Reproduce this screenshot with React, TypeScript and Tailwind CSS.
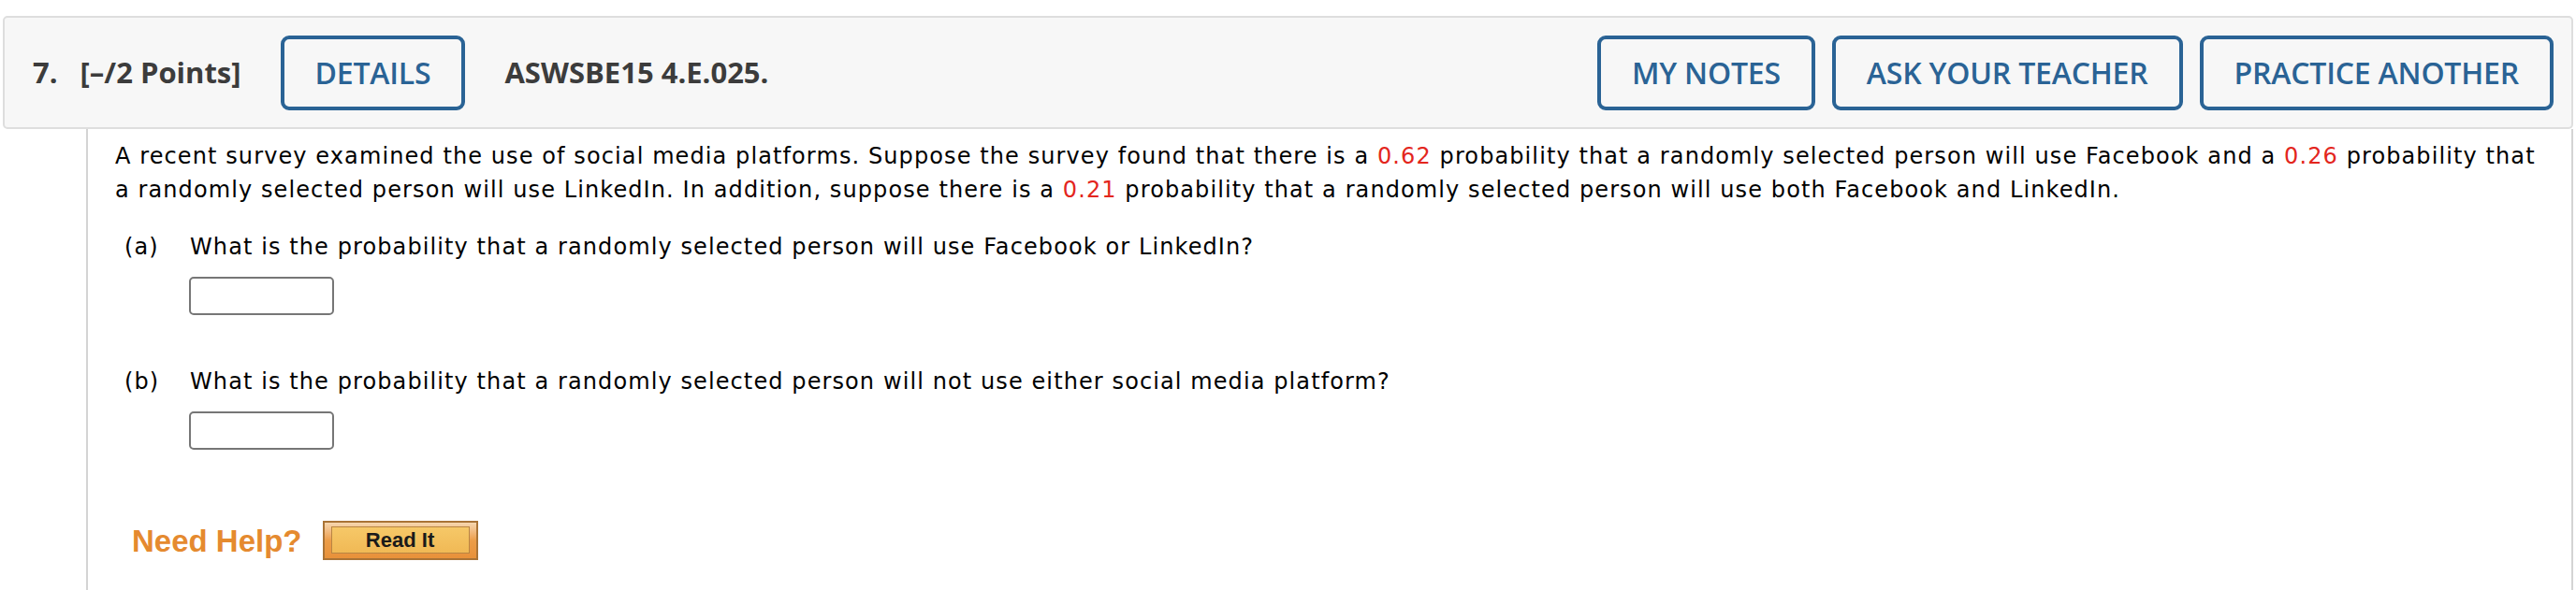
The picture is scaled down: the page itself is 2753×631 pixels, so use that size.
const HeaderButton = ({ label }: { label: string }) => (
  <button className="h-[80px] px-[33px] rounded-[9px] border-4 border-[#2a6395] text-[#2a6395] font-semibold text-[32px] leading-none tracking-[-0.2px]">
    {label}
  </button>
);

const Red = ({ children }: { children: string }) => (
  <span className="text-[#e3261d]">{children}</span>
);

const AnswerBox = () => (
  <input
    type="text"
    className="block ml-[69px] w-[155px] h-[41px] border-2 border-[#767676] rounded-[5px] bg-white outline-none"
  />
);

export default function App() {
  return (
    <div className="w-full bg-white pt-[17px] px-[3px]" style={{ fontFamily: '"Open Sans", sans-serif' }}>
      <div className="h-[121px] flex items-center border-2 border-[#dedede] rounded-[5px] bg-[#f7f7f7] pl-[30px] pr-[19px]">
        <div className="flex items-center text-[31px] font-bold text-[#3c3c3c] leading-none">
          <span>7.</span>
          <span className="ml-[24px]">[–/2 Points]</span>
        </div>
        <div className="ml-[42px]">
          <HeaderButton label="DETAILS" />
        </div>
        <div className="ml-[42px] text-[31px] font-bold text-[#3c3c3c] leading-none">ASWSBE15 4.E.025.</div>
        <div className="ml-auto flex gap-[18px]">
          <HeaderButton label="MY NOTES" />
          <HeaderButton label="ASK YOUR TEACHER" />
          <HeaderButton label="PRACTICE ANOTHER" />
        </div>
      </div>

      <div
        className="ml-[89px] h-[493px] border-l-2 border-r-2 border-[#d4d4d4] pl-[29px] pr-[30px] pt-[11px] text-black text-[24px] leading-[36px] tracking-[1.1px]"
        style={{ fontFamily: '"DejaVu Sans", Verdana, sans-serif' }}
      >
        <p>
          A recent survey examined the use of social media platforms. Suppose the survey found that there is a <Red>0.62</Red> probability that a randomly selected person will use Facebook and a <Red>0.26</Red> probability that a randomly selected person will use LinkedIn. In addition, suppose there is a <Red>0.21</Red> probability that a randomly selected person will use both Facebook and LinkedIn.
        </p>

        <div className="mt-[25px] ml-[10px]">
          <div className="flex">
            <span className="w-[70px] shrink-0">(a)</span>
            <span>What is the probability that a randomly selected person will use Facebook or LinkedIn?</span>
          </div>
          <div className="mt-[14px]">
            <AnswerBox />
          </div>
        </div>

        <div className="mt-[53px] ml-[10px]">
          <div className="flex">
            <span className="w-[70px] shrink-0">(b)</span>
            <span>What is the probability that a randomly selected person will not use either social media platform?</span>
          </div>
          <div className="mt-[14px]">
            <AnswerBox />
          </div>
        </div>

        <div className="mt-[76px] ml-[18px] flex items-center tracking-normal">
          <span
            className="text-[33px] font-bold text-[#e58a2f] leading-none"
            style={{ fontFamily: '"Liberation Sans", Arial, sans-serif' }}
          >
            Need Help?
          </span>
          <button
            className="ml-[22px] w-[166px] h-[42px] border-2 border-[#a97336] bg-gradient-to-b from-[#f6d6ae] via-[#ec9d48] to-[#e8913a] px-[7px] pt-[4px] pb-[5px]"
            style={{ fontFamily: '"Liberation Sans", Arial, sans-serif' }}
          >
            <div className="h-full w-full border border-[#b98543] bg-gradient-to-b from-[#f6c868] to-[#f0b955] flex items-center justify-center text-[22px] font-bold text-[#1a1a1a] leading-none">
              Read It
            </div>
          </button>
        </div>
      </div>
    </div>
  );
}
